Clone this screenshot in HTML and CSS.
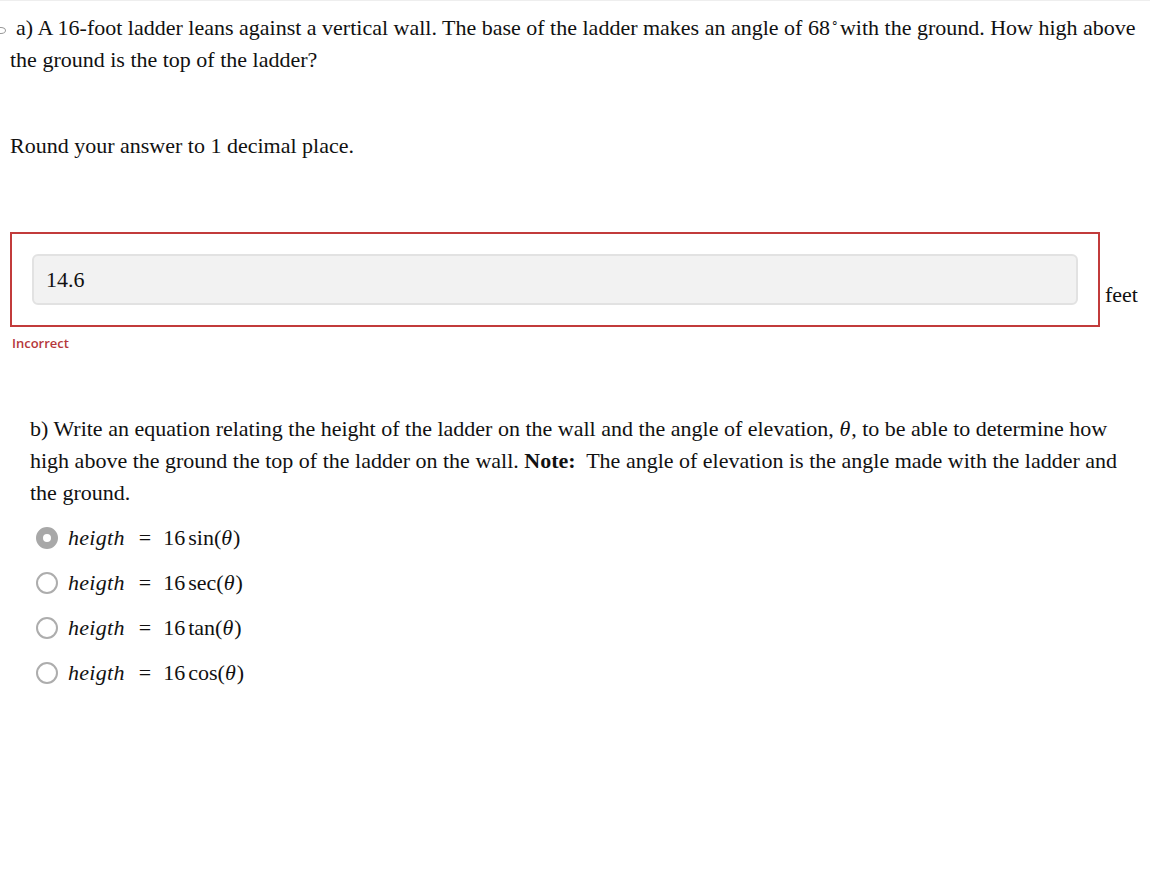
FILE: index.html
```html
<!DOCTYPE html>
<html>
<head>
<meta charset="utf-8">
<link rel="stylesheet" href="styles.css">
</head>
<body>
<div class="page">
  <p class="q first"><span class="cut"></span>a) A 16-foot ladder leans against a vertical wall. The base of the ladder makes an angle of 68<span class="deg">∘</span>with the ground. How high above the ground is the top of the ladder?</p>
  <p class="q round">Round your answer to 1 decimal place.</p>
  <div class="answer-row">
    <div class="answer-box">
      <div class="input">14.6</div>
    </div>
    <span class="unit">feet</span>
  </div>
  <div class="incorrect">Incorrect</div>

  <div class="partb">
    <p class="q">b) Write an equation relating the height of the ladder on the wall and the angle of elevation, <span class="theta">θ</span>, to be able to determine how high above the ground the top of the ladder on the wall. <b>Note:</b>&nbsp; The angle of elevation is the angle made with the ladder and the ground.</p>
    <ul class="options">
      <li class="opt"><span class="radio checked"></span><span class="math"><span class="var">heigth</span><span class="eq">=</span>16<span class="fn">sin</span>(<span class="theta">θ</span>)</span></li>
      <li class="opt"><span class="radio"></span><span class="math"><span class="var">heigth</span><span class="eq">=</span>16<span class="fn">sec</span>(<span class="theta">θ</span>)</span></li>
      <li class="opt"><span class="radio"></span><span class="math"><span class="var">heigth</span><span class="eq">=</span>16<span class="fn">tan</span>(<span class="theta">θ</span>)</span></li>
      <li class="opt"><span class="radio"></span><span class="math"><span class="var">heigth</span><span class="eq">=</span>16<span class="fn">cos</span>(<span class="theta">θ</span>)</span></li>
    </ul>
  </div>
</div>
</body>
</html>
```

FILE: styles.css
```css
html, body {
  margin: 0;
  padding: 0;
  background: #fff;
}
body {
  font-family: "Liberation Serif", "Times New Roman", serif;
  font-size: 22px;
  color: #111;
  border-top: 1px solid #eeeeee;
}
.page {
  padding: 11px 0 0 10px;
}
.q {
  margin: 0;
  line-height: 32px;
}
.first {
  padding-right: 8px;
}
.cut {
  display: inline-block;
  width: 10px;
  height: 7px;
  margin-left: -14px;
  margin-right: 10px;
  border: 1.5px solid #999;
  border-radius: 50%;
  vertical-align: 1px;
  box-sizing: border-box;
}
.deg {
  display: inline-block;
  font-size: 12px;
  line-height: 12px;
  vertical-align: 8px;
  margin: 0 1px 0 1px;
}
.theta {
  font-style: italic;
  padding-right: 1px;
}
.round {
  margin-top: 54px;
}
.answer-row {
  display: flex;
  align-items: flex-end;
  margin-top: 70px;
}
.answer-box {
  width: 1090px;
  box-sizing: border-box;
  border: 2px solid #c23b3b;
  padding: 20px;
}
.input {
  height: 51px;
  box-sizing: border-box;
  background: #f2f2f2;
  border: 2px solid #e2e2e2;
  border-radius: 6px;
  padding: 0 12px;
  line-height: 47px;
  font-size: 22px;
  color: #111;
}
.unit {
  margin-left: 5px;
  margin-bottom: 16px;
  line-height: 32px;
}
.incorrect {
  font-family: "Open Sans", "Liberation Sans", sans-serif;
  font-weight: 600;
  font-size: 13px;
  color: #b5373a;
  margin-top: 6px;
  margin-left: 2px;
  line-height: 20px;
}
.partb {
  padding-left: 20px;
  margin-top: 60px;
  padding-right: 20px;
}
.options {
  list-style: none;
  margin: 6px 0 0 0;
  padding: 0;
}
.opt {
  display: flex;
  align-items: center;
  height: 45px;
}
.radio {
  width: 22px;
  height: 22px;
  box-sizing: border-box;
  border: 2px solid #adadad;
  border-radius: 50%;
  margin-left: 6px;
  margin-right: 10px;
  flex: none;
}
.radio.checked {
  border: 7px solid #a8a8a8;
  background: #fff;
}
.math {
  font-size: 22px;
  white-space: nowrap;
}
.var {
  font-style: italic;
  letter-spacing: 0.3px;
}
.eq {
  margin: 0 12px 0 14px;
}
.fn {
  margin-left: 3px;
}
```
